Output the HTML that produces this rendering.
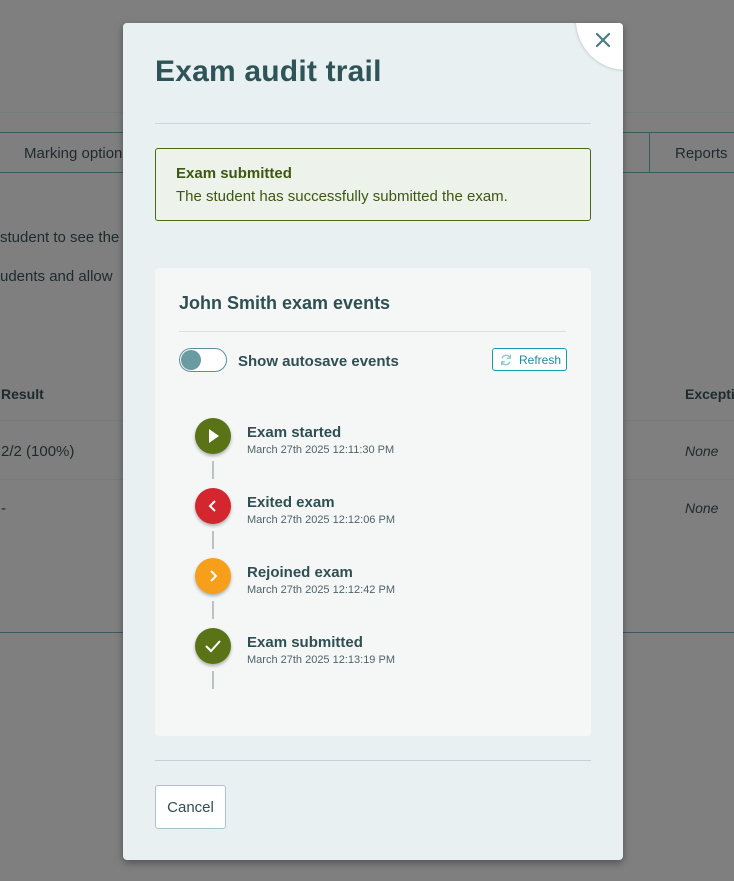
<!DOCTYPE html>
<html><head><meta charset="utf-8"><style>
*{margin:0;padding:0;box-sizing:border-box}
body{width:734px;height:881px;background:#7f7f7f;position:relative;overflow:hidden;font-family:"Liberation Sans",sans-serif;color:#2f4f52}
.a{position:absolute}
.bg{color:#1e2a2c;font-size:15px}
.ln{position:absolute;height:1px;background:#6a7677}
.c{position:absolute;left:195px;width:36px;height:36px;border-radius:50%;box-shadow:0 2px 3px rgba(0,0,0,.3)}
.t{position:absolute;left:247px;font-weight:bold;font-size:15px;color:#2f4f52}
.d{position:absolute;left:247px;font-size:11px;color:#4e6466}
.v{position:absolute;left:212px;width:2px;height:18px;background:#bcc2c3}
</style></head><body>
<div class="ln" style="left:0;right:0;top:112px;background:#737d7e"></div>
<div class="ln" style="left:0;right:0;top:132px;background:#3d5a5e"></div>
<div class="ln" style="left:0;right:0;top:172px;background:#3d5a5e"></div>
<div class="a" style="left:649px;top:132px;width:1px;height:40px;background:#3d5a5e"></div>
<div class="a bg" style="left:24px;top:145px">Marking options</div>
<div class="a bg" style="left:675px;top:145px">Reports</div>
<div class="a bg" style="left:0;top:229px">student to see the</div>
<div class="a bg" style="left:0;top:268px">udents and allow</div>
<div class="a bg" style="left:1px;top:386px;font-weight:bold;font-size:14px">Result</div>
<div class="a bg" style="left:685px;top:386px;font-weight:bold;font-size:14px">Exceptions</div>
<div class="ln" style="left:0;right:0;top:420px;background:#737c7d"></div>
<div class="a bg" style="left:1px;top:443px">2/2 (100%)</div>
<div class="a bg" style="left:685px;top:443px;font-style:italic;font-size:14px">None</div>
<div class="ln" style="left:0;right:0;top:479px;background:#737c7d"></div>
<div class="a bg" style="left:1px;top:500px">-</div>
<div class="a bg" style="left:685px;top:500px;font-style:italic;font-size:14px">None</div>
<div class="ln" style="left:0;right:0;top:632px;background:#3d5a5e"></div>

<div class="a" style="left:123px;top:23px;width:500px;height:837px;background:#e8f0f2;border-radius:4px;box-shadow:0 3px 8px rgba(0,0,0,.35);overflow:hidden">
 <div class="a" style="left:453px;top:-53px;width:100px;height:100px;border-radius:50%;background:#fff;box-shadow:0 0 3px rgba(0,0,0,.25)"></div>
 <svg class="a" style="left:472px;top:9px" width="16" height="16" viewBox="0 0 16 16"><path d="M2 2L14 14M14 2L2 14" stroke="#4a7b82" stroke-width="2.2" stroke-linecap="round"/></svg>
 <div class="a" style="left:32px;top:32px;font-size:30px;font-weight:bold;color:#2f5458;letter-spacing:.2px">Exam audit trail</div>
 <div class="a" style="left:32px;top:100px;width:436px;height:1px;background:#cdd6d8"></div>
 <div class="a" style="left:32px;top:125px;width:436px;height:73px;border:1px solid #4b6b0d;border-radius:3px;background:#edf2ea">
  <div class="a" style="left:20px;top:16px;font-weight:bold;font-size:15px;color:#3e5711">Exam submitted</div>
  <div class="a" style="left:20px;top:39px;font-size:15px;color:#3e5711">The student has successfully submitted the exam.</div>
 </div>
 <div class="a" style="left:32px;top:245px;width:436px;height:468px;background:#f5f7f7;border-radius:4px"></div>
 <div class="a" style="left:56px;top:270px;font-size:18px;font-weight:bold;color:#2f4f52">John Smith exam events</div>
 <div class="a" style="left:56px;top:308px;width:387px;height:1px;background:#dadfe0"></div>
 <div class="a" style="left:56px;top:325px;width:48px;height:24px;border:1px solid #5d8f98;border-radius:12px;background:#fff"><div class="a" style="left:1px;top:1px;width:20px;height:20px;border-radius:50%;background:#6a9aa2"></div></div>
 <div class="a" style="left:115px;top:330px;font-size:15px;font-weight:bold;color:#2f4f52">Show autosave events</div>
 <div class="a" style="left:369px;top:325px;width:75px;height:23px;border:1px solid #1a99b3;border-radius:3px;background:#fff;font-size:12px;color:#1a8aa3;padding:4px 0 0 26px">Refresh
  <svg class="a" style="left:6px;top:4px" width="14" height="14" viewBox="0 0 16 16"><path d="M12.5 5A5 5 0 0 0 3.5 6M3.5 11A5 5 0 0 0 12.5 10" fill="none" stroke="#8cc6d1" stroke-width="1.6"/><path d="M13 2V6H9M3 14V10H7" fill="none" stroke="#8cc6d1" stroke-width="1.4"/></svg></div>
</div>
<div class="c" style="top:418px;background:#5a7317"><svg width="36" height="36"><path d="M14 11L24 18L14 25Z" fill="#fff"/></svg></div>
<div class="t" style="top:424px">Exam started</div><div class="d" style="top:444px">March 27th 2025 12:11:30 PM</div>
<div class="v" style="top:461px"></div>
<div class="c" style="top:488px;background:#d4262e"><svg width="36" height="36"><path d="M20 13L15 18L20 23" fill="none" stroke="#fff" stroke-width="2"/></svg></div>
<div class="t" style="top:494px">Exited exam</div><div class="d" style="top:514px">March 27th 2025 12:12:06 PM</div>
<div class="v" style="top:531px"></div>
<div class="c" style="top:558px;background:#f79e1b"><svg width="36" height="36"><path d="M16 13L21 18L16 23" fill="none" stroke="#fff" stroke-width="2"/></svg></div>
<div class="t" style="top:564px">Rejoined exam</div><div class="d" style="top:584px">March 27th 2025 12:12:42 PM</div>
<div class="v" style="top:601px"></div>
<div class="c" style="top:628px;background:#5a7317"><svg width="36" height="36"><path d="M11 18L16 23L25 13" fill="none" stroke="#fff" stroke-width="2"/></svg></div>
<div class="t" style="top:634px">Exam submitted</div><div class="d" style="top:654px">March 27th 2025 12:13:19 PM</div>
<div class="v" style="top:671px"></div>
<div class="a" style="left:155px;top:760px;width:436px;height:1px;background:#c6d1d4"></div>
<div class="a" style="left:155px;top:785px;width:71px;height:44px;border:1px solid #a9c4c9;border-radius:3px;background:#fff;font-size:15px;color:#2f4f52;text-align:center;line-height:44px">Cancel</div>
</body></html>
